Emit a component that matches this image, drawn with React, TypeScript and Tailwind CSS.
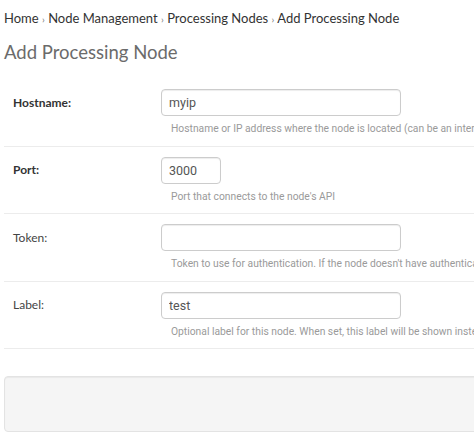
import React from "react";

const rows = [
  {
    label: "Hostname:",
    bold: true,
    value: "myip",
    width: "w-[240px]",
    help: "Hostname or IP address where the node is located (can be an internal hostname as well). If you are using Docker, this is never 127.0.0.1 or localhost.",
  },
  {
    label: "Port:",
    bold: true,
    value: "3000",
    width: "w-[60px]",
    help: "Port that connects to the node's API",
  },
  {
    label: "Token:",
    bold: false,
    value: "",
    width: "w-[240px]",
    help: "Token to use for authentication. If the node doesn't have authentication, you can leave this field blank.",
  },
  {
    label: "Label:",
    bold: false,
    value: "test",
    width: "w-[240px]",
    help: "Optional label for this node. When set, this label will be shown instead of the hostname:port name.",
  },
];

export default function App() {
  return (
    <div className="w-[474px] h-[441px] overflow-hidden bg-white font-['Lato',sans-serif]">
      <div className="w-[560px] pl-[4px] pt-[8px]">
        <div className="text-[13px] leading-[20px] text-[#333] whitespace-nowrap">
          Home <span className="text-[10px] text-[#777]">›</span> Node Management{" "}
          <span className="text-[10px] text-[#777]">›</span> Processing Nodes{" "}
          <span className="text-[10px] text-[#777]">›</span> Add Processing Node
        </div>
        <h3 className="mt-[8px] text-[18.5px] leading-[30px] text-[#6b6b6b] whitespace-nowrap">
          Add Processing Node
        </h3>
        <div className="mt-[12px]">
          {rows.map((r) => (
            <div
              key={r.label}
              className="flex border-b border-[#ececec] pt-[10px] pb-[9.5px]"
            >
              <div className="w-[157px] shrink-0 pl-[9px] h-[27px] flex items-center">
                <span
                  className={
                    r.bold
                      ? "text-[12px] font-bold text-[#333]"
                      : "text-[12px] text-[#444]"
                  }
                >
                  {r.label}
                </span>
              </div>
              <div className="flex flex-col min-w-0 overflow-hidden">
                <input
                  readOnly
                  value={r.value}
                  className={`${r.width} h-[27px] border border-[#cccccc] rounded-[4px] px-[7px] text-[12.5px] text-[#555] font-['Roboto',sans-serif] shadow-[inset_0_1px_1px_rgba(0,0,0,0.075)] outline-none`}
                />
                <div className="mt-[5px] pl-[10px] text-[10.3px] leading-[15px] text-[#9a9a9a] font-['Roboto',sans-serif] whitespace-nowrap">
                  {r.help}
                </div>
              </div>
            </div>
          ))}
        </div>
        <div className="mt-[27px] h-[56px] bg-[#f5f5f5] border border-[#e3e3e3] rounded-[4px] shadow-[inset_0_1px_1px_rgba(0,0,0,0.05)]" />
      </div>
    </div>
  );
}
